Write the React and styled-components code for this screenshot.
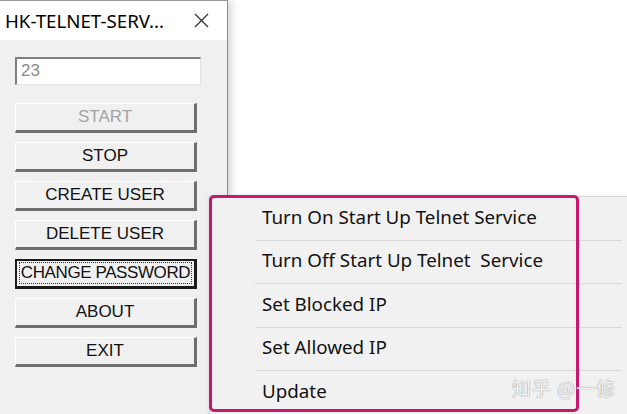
import { createGlobalStyle, styled } from "styled-components";

const GlobalStyle = createGlobalStyle`
    html, body {
        margin: 0;
        padding: 0;
        background: #ffffff;
        overflow: hidden;
    }
`;

const Screen = styled.div`
    position: relative;
    width: 627px;
    height: 414px;
    overflow: hidden;
    background: #ffffff;
`;

const Window = styled.div`
    width: 228px;
    height: 414px;
    display: flex;
    flex-direction: column;
    border-top: 1px solid #9a9a9a;
    border-right: 1px solid #8c8c8c;
    box-sizing: border-box;
    box-shadow: 3px 0 8px rgba(0, 0, 0, 0.18);
`;

const TitleBar = styled.div`
    height: 39px;
    display: flex;
    align-items: center;
    justify-content: space-between;
    padding: 0 18px 0 5px;
    background: #ffffff;
    font-family: "Noto Sans", "Open Sans", sans-serif;
    font-size: 18.7px;
    color: #000;
`;

const Body = styled.div`
    flex: 1;
    display: flex;
    flex-direction: column;
    gap: 9px;
    padding: 17px 0 0 15px;
    background: #f0f0f0;
`;

const PortInput = styled.div`
    width: 186px;
    height: 28px;
    box-sizing: border-box;
    margin-bottom: 9px;
    padding: 2px 0 0 4px;
    background: #ffffff;
    border-top: 2px solid #808080;
    border-left: 2px solid #808080;
    border-right: 1px solid #e3e3e3;
    border-bottom: 1px solid #e3e3e3;
    font-family: "Liberation Sans", Arial, sans-serif;
    font-size: 17px;
    color: #8a8a8a;
`;

const Button = styled.div`
    width: 182px;
    height: 30px;
    box-sizing: border-box;
    display: flex;
    align-items: center;
    justify-content: center;
    padding-bottom: 1px;
    background: #f0f0f0;
    border-top: 1px solid #ffffff;
    border-left: 1px solid #ffffff;
    border-right: 3px solid #6e6e6e;
    border-bottom: 3px solid #6e6e6e;
    font-family: "Liberation Sans", Arial, sans-serif;
    font-size: 17px;
    color: ${({ $disabled }) => ($disabled ? "#a3a3a3" : "#111")};
    ${({ $focused }) =>
        $focused &&
        `
        border: 2px solid #1a1a1a;
        border-right-width: 3px;
        border-bottom-width: 3px;
        letter-spacing: -0.4px;
        `}
`;

const FocusRing = styled.span`
    border: 1px dotted #333;
    padding: 0 1px;
    line-height: 20px;
`;

const Menu = styled.div`
    position: absolute;
    left: 209px;
    top: 196px;
    right: -6px;
    bottom: -6px;
    background: #f1f1f1;
    border: 1px solid #d6d6d6;
    display: flex;
    flex-direction: column;
    box-shadow: -1px 0 4px rgba(0, 0, 0, 0.08);
`;

const MenuItem = styled.div`
    height: 43.5px;
    box-sizing: border-box;
    display: flex;
    align-items: center;
    padding: 0 0 4px 52px;
    font-family: "Noto Sans", "Open Sans", sans-serif;
    font-size: 18.8px;
    color: #111;
    white-space: pre;
    position: relative;
    &:not(:last-child)::after {
        content: "";
        position: absolute;
        left: 45px;
        right: 10px;
        bottom: 0;
        height: 1px;
        background: #d9d9d9;
    }
`;

const Highlight = styled.div`
    position: absolute;
    left: 209px;
    top: 195px;
    width: 370px;
    height: 217px;
    box-sizing: border-box;
    border: 3px solid #c8176e;
    border-radius: 5px;
    pointer-events: none;
`;

const Watermark = styled.div`
    position: absolute;
    left: 512px;
    top: 374px;
    font-family: "Noto Sans CJK SC", sans-serif;
    font-size: 19px;
    color: #f6f6f6;
    text-shadow: 0 0 1px #9a9a9a, 0 0 1px #9a9a9a;
    letter-spacing: 1px;
`;

const buttons = [
    { label: "START", disabled: true },
    { label: "STOP" },
    { label: "CREATE USER" },
    { label: "DELETE USER" },
    { label: "CHANGE PASSWORD", focused: true },
    { label: "ABOUT" },
    { label: "EXIT" },
];

const menuItems = [
    "Turn On Start Up Telnet Service",
    "Turn Off Start Up Telnet  Service",
    "Set Blocked IP",
    "Set Allowed IP",
    "Update",
];

function CloseIcon() {
    return (
        <svg width="15" height="15" viewBox="0 0 15 15">
            <path d="M1 1L14 14M14 1L1 14" stroke="#333" strokeWidth="1.3" fill="none" />
        </svg>
    );
}

export default function App() {
    return (
        <Screen>
            <GlobalStyle />
            <Window>
                <TitleBar>
                    <span>HK-TELNET-SERV...</span>
                    <CloseIcon />
                </TitleBar>
                <Body>
                    <PortInput>23</PortInput>
                    {buttons.map(b => (
                        <Button key={b.label} $disabled={b.disabled} $focused={b.focused}>
                            {b.focused ? <FocusRing>{b.label}</FocusRing> : b.label}
                        </Button>
                    ))}
                </Body>
            </Window>
            <Menu>
                {menuItems.map(item => (
                    <MenuItem key={item}>{item}</MenuItem>
                ))}
            </Menu>
            <Highlight />
            <Watermark>知乎 @一修</Watermark>
        </Screen>
    );
}
